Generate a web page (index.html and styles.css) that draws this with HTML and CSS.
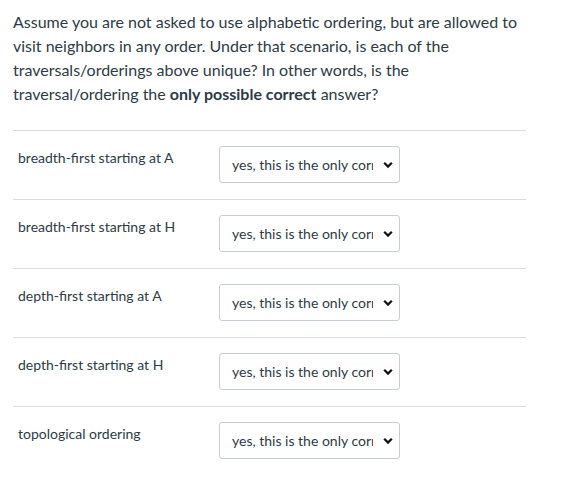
FILE: index.html
```html
<!DOCTYPE html>
<html>
<head>
<meta charset="utf-8">
<link rel="stylesheet" href="styles.css">
</head>
<body>
<div class="question">
  <p class="prompt">Assume you are not asked to use alphabetic ordering, but are allowed to visit neighbors in any order. Under that scenario, is each of the traversals/orderings above unique? In other words, is the traversal/ordering the <strong>only possible correct</strong> answer?</p>
  <div class="answers">
    <div class="row">
      <div class="label">breadth-first starting at A</div>
      <div class="select"><span class="value">yes, this is the only correct answer</span><svg class="chev" viewBox="0 0 10 8" width="10" height="8"><path d="M1.2 1.8 L5 5.6 L8.8 1.8" fill="none" stroke="#111" stroke-width="2.2"/></svg></div>
    </div>
    <div class="row">
      <div class="label">breadth-first starting at H</div>
      <div class="select"><span class="value">yes, this is the only correct answer</span><svg class="chev" viewBox="0 0 10 8" width="10" height="8"><path d="M1.2 1.8 L5 5.6 L8.8 1.8" fill="none" stroke="#111" stroke-width="2.2"/></svg></div>
    </div>
    <div class="row">
      <div class="label">depth-first starting at A</div>
      <div class="select"><span class="value">yes, this is the only correct answer</span><svg class="chev" viewBox="0 0 10 8" width="10" height="8"><path d="M1.2 1.8 L5 5.6 L8.8 1.8" fill="none" stroke="#111" stroke-width="2.2"/></svg></div>
    </div>
    <div class="row">
      <div class="label">depth-first starting at H</div>
      <div class="select"><span class="value">yes, this is the only correct answer</span><svg class="chev" viewBox="0 0 10 8" width="10" height="8"><path d="M1.2 1.8 L5 5.6 L8.8 1.8" fill="none" stroke="#111" stroke-width="2.2"/></svg></div>
    </div>
    <div class="row">
      <div class="label">topological ordering</div>
      <div class="select"><span class="value">yes, this is the only correct answer</span><svg class="chev" viewBox="0 0 10 8" width="10" height="8"><path d="M1.2 1.8 L5 5.6 L8.8 1.8" fill="none" stroke="#111" stroke-width="2.2"/></svg></div>
    </div>
  </div>
</div>
</body>
</html>
```
FILE: styles.css
```css
html, body {
  margin: 0;
  padding: 0;
  background: #fff;
}
body {
  font-family: Lato, "Open Sans", sans-serif;
  color: #2d3b45;
}
.question {
  width: 513px;
  margin-left: 13px;
}
.prompt {
  margin: 10px 0 0 0;
  font-size: 16px;
  line-height: 24px;
}
.prompt strong {
  font-weight: 700;
}
.answers {
  margin-top: 24px;
}
.row {
  display: flex;
  align-items: flex-start;
  border-top: 1px solid #dadada;
  height: 68px;
}
.label {
  width: 201px;
  padding-left: 5px;
  padding-top: 18px;
  font-size: 14px;
  line-height: 18px;
}
.select {
  margin-top: 15px;
  box-sizing: border-box;
  width: 181px;
  height: 37px;
  border: 1px solid #c7cdd1;
  border-radius: 3px;
  display: flex;
  align-items: center;
  padding-left: 12px;
  padding-right: 6px;
  font-size: 14px;
}
.value {
  width: 143px;
  overflow: hidden;
  white-space: nowrap;
}
.chev {
  margin-left: 10px;
  flex: none;
}
```
